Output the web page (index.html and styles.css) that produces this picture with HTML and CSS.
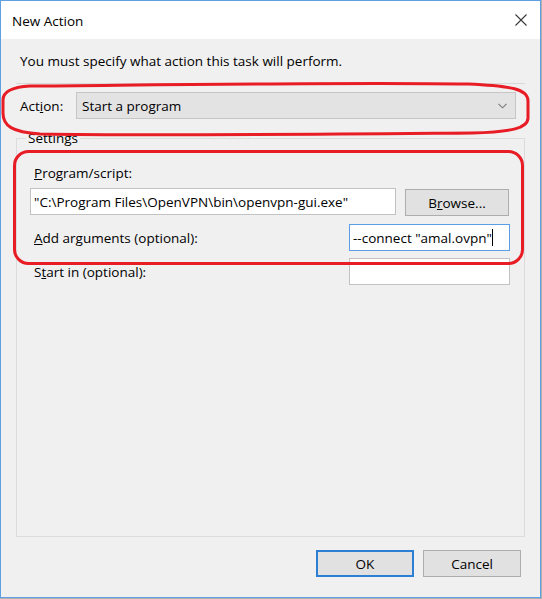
FILE: index.html
```html
<!DOCTYPE html>
<html>
<head>
<meta charset="utf-8">
<link rel="stylesheet" href="styles.css">
</head>
<body>
<div class="window">
  <div class="titlebar">
    <span class="title">New Action</span>
    <svg class="close" width="12" height="12" viewBox="0 0 12 12"><path d="M0.5 0.5 L11.5 11.5 M11.5 0.5 L0.5 11.5" stroke="#3a3a3a" stroke-width="1.1" fill="none"/></svg>
  </div>
  <div class="content">
    <p class="intro">You must specify what action this task will perform.</p>
    <div class="separator"></div>
    <div class="action-row">
      <span class="label">Act<u>i</u>on:</span>
      <div class="combo">
        <span>Start a program</span>
        <svg width="9" height="6" viewBox="0 0 9 6"><path d="M0.5 0.8 L4.5 4.8 L8.5 0.8" stroke="#7a7a7a" stroke-width="1.1" fill="none"/></svg>
      </div>
    </div>
    <fieldset class="group">
      <legend>Settings</legend>
      <div class="field-label"><u>P</u>rogram/script:</div>
      <div class="path-row">
        <div class="textbox path">"C:\Program Files\OpenVPN\bin\openvpn-gui.exe"</div>
        <div class="button browse">B<u>r</u>owse...</div>
      </div>
      <div class="opt-row">
        <span class="field-label inline"><u>A</u>dd arguments (optional):</span>
        <div class="textbox small focused">--connect "amal.ovpn"<span class="caret"></span></div>
      </div>
      <div class="opt-row">
        <span class="field-label inline">S<u>t</u>art in (optional):</span>
        <div class="textbox small"></div>
      </div>
    </fieldset>
    <div class="footer">
      <div class="button ok">OK</div>
      <div class="button">Cancel</div>
    </div>
  </div>
  <svg class="annotations" width="542" height="599" viewBox="0 0 542 599">
    <path d="M30 86 C150 85 350 82 468 84 C512 86 528 89 528 101 L528 118 C528 128 512 132 472 133 C350 134 150 136 40 134 C12 132 3 126 3 113 L3 100 C3 91 12 87 30 86 Z" stroke="#e81c24" stroke-width="3" fill="none"/>
    <rect x="14.5" y="151.5" width="508" height="112" rx="14" ry="14" stroke="#e81c24" stroke-width="3" fill="none"/>
  </svg>
</div>
</body>
</html>
```
FILE: styles.css
```css
html, body {
  margin: 0;
  padding: 0;
}
body {
  background: #b0b0b0;
  font-family: "Open Sans", "Noto Sans", sans-serif;
  font-size: 13.5px;
  line-height: 18px;
  color: #000;
}
.window {
  position: relative;
  box-sizing: border-box;
  width: 541px;
  height: 598px;
  border: 1px solid #5fa0e2;
  background: #f0f0f0;
  display: flex;
  flex-direction: column;
}
.titlebar {
  height: 38px;
  flex: none;
  background: #ffffff;
  display: flex;
  align-items: center;
  justify-content: space-between;
  padding-left: 11px;
  padding-top: 1px;
  box-sizing: border-box;
}
.title {
  color: #000;
}
.close {
  margin-right: 13px;
  margin-top: -1px;
}
.content {
  flex: 1;
  display: flex;
  flex-direction: column;
  padding: 0 15px 0 15px;
}
.intro {
  margin: 13px 0 13px 4px;
}
.separator {
  height: 1px;
  background: #d8d8d8;
}
.action-row {
  margin-top: 8px;
  display: flex;
  align-items: center;
  padding-left: 4px;
  padding-right: 9px;
}
.action-row .label {
  width: 56px;
}
.combo {
  flex: 1;
  height: 27px;
  box-sizing: border-box;
  background: #e3e3e3;
  border: 1px solid #c6c6c6;
  display: flex;
  align-items: center;
  justify-content: space-between;
  padding: 0 8px 0 5px;
}
.group {
  flex: 1;
  margin: 10px 0 13px 0;
  border: 1px solid #dcdcdc;
  padding: 17px 14px 0 13px;
  min-width: 0;
}
.group legend {
  margin-left: -4px;
  padding: 0 2px;
}
.field-label {
  padding-left: 4px;
}
.path-row {
  margin-top: 6px;
  display: flex;
  align-items: flex-start;
  gap: 9px;
}
.textbox {
  box-sizing: border-box;
  height: 27px;
  background: #ffffff;
  border: 1px solid #c2c2c2;
  padding: 0 3px;
  display: flex;
  align-items: center;
  white-space: nowrap;
  color: #000;
}
.path {
  flex: 1;
}
.button {
  box-sizing: border-box;
  height: 27px;
  background: #e1e1e1;
  border: 1px solid #adadad;
  display: flex;
  align-items: center;
  justify-content: center;
  color: #000;
}
.browse {
  width: 104px;
  margin-top: 1px;
  margin-right: 1px;
}
.opt-row {
  display: flex;
  align-items: center;
  justify-content: space-between;
  margin-top: 8px;
}
.opt-row + .opt-row {
  margin-top: 7px;
}
.small {
  width: 161px;
}
.focused {
  border-color: #5a9fe6;
}
.caret {
  display: inline-block;
  width: 1px;
  height: 17px;
  background: #000;
}
.footer {
  display: flex;
  justify-content: flex-end;
  gap: 9px;
  padding-right: 4px;
  padding-bottom: 20px;
}
.footer .button {
  width: 98px;
}
.ok {
  border: 2px solid #2b80d6;
}
.annotations {
  position: absolute;
  left: -1px;
  top: -1px;
  pointer-events: none;
}
```
